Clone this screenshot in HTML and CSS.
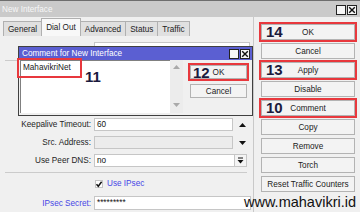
FILE: index.html
```html
<!DOCTYPE html>
<html>
<head>
<meta charset="utf-8">
<link rel="stylesheet" href="styles.css">
</head>
<body>
<div class="win">
  <div class="titlebar">
    <span class="title">New Interface</span>
    <span class="wctl">
      <svg viewBox="0 0 10 10"><rect x="0.5" y="0.5" width="9" height="9" fill="#f6f6f6" stroke="#222"/></svg>
      <svg viewBox="0 0 10 10"><rect x="0.5" y="0.5" width="9" height="9" fill="#f6f6f6" stroke="#222"/><path d="M2.2 2.2L7.8 7.8M7.8 2.2L2.2 7.8" stroke="#111" stroke-width="1.4"/></svg>
    </span>
  </div>
  <div class="main">
    <div class="left">
      <div class="tabs">
        <div class="tab">General</div>
        <div class="tab active">Dial Out</div>
        <div class="tab">Advanced</div>
        <div class="tab">Status</div>
        <div class="tab">Traffic</div>
      </div>
      <div class="panel">
        <div class="row"><span class="lbl"></span><span class="field wide"></span></div>
        <div class="sep first"></div>
        <div class="row"><span class="lbl"></span><span class="field"></span></div>
        <div class="row"><span class="lbl"></span><span class="field"></span></div>
        <div class="row"><span class="lbl"></span><span class="field"></span></div>
        <div class="row">
          <span class="lbl">Keepalive Timeout:</span><span class="field">60</span>
          <svg class="tog" viewBox="0 0 7 4"><polygon points="0,4 7,4 3.5,0" fill="#111"/></svg>
        </div>
        <div class="row">
          <span class="lbl">Src. Address:</span><span class="field off"></span>
          <svg class="tog" viewBox="0 0 7 4"><polygon points="0,0 7,0 3.5,4" fill="#111"/></svg>
        </div>
        <div class="row">
          <span class="lbl">Use Peer DNS:</span>
          <span class="field combo"><span class="ctext">no</span><span class="cbtn"><svg viewBox="0 0 7 7"><path d="M1 1H6" stroke="#111" stroke-width="1"/><polygon points="0.5,3 6.5,3 3.5,6.5" fill="#111"/></svg></span></span>
        </div>
        <div class="sep second"></div>
        <div class="row chkrow">
          <span class="chk"><svg viewBox="0 0 8 8"><path d="M1.5 4.2L3.3 6.2L6.6 1.8" fill="none" stroke="#111" stroke-width="1.5"/></svg></span>
          <span class="blue chklbl">Use IPsec</span>
        </div>
        <div class="row secret">
          <span class="lbl blue">IPsec Secret:</span><span class="field sfield">*********</span>
        </div>
      </div>
    </div>
    <div class="buttons">
      <div class="btn mark"><span class="num">14</span>OK</div>
      <div class="btn">Cancel</div>
      <div class="btn mark"><span class="num">13</span>Apply</div>
      <div class="btn">Disable</div>
      <div class="btn mark"><span class="num">10</span>Comment</div>
      <div class="btn">Copy</div>
      <div class="btn">Remove</div>
      <div class="btn">Torch</div>
      <div class="btn">Reset Traffic Counters</div>
    </div>
  </div>

  <div class="dialog">
    <div class="dtitle">
      <span>Comment for New Interface</span>
      <span class="wctl">
        <svg viewBox="0 0 10 10"><rect x="0.5" y="0.5" width="9" height="9" fill="#f6f6f6" stroke="#222"/></svg>
        <svg viewBox="0 0 10 10"><rect x="0.5" y="0.5" width="9" height="9" fill="#f6f6f6" stroke="#222"/><path d="M2.2 2.2L7.8 7.8M7.8 2.2L2.2 7.8" stroke="#111" stroke-width="1.4"/></svg>
      </span>
    </div>
    <div class="dbody">
      <div class="tarea">MahavikriNet</div>
      <div class="scroll">
        <svg viewBox="0 0 7 4"><polygon points="0,4 7,4 3.5,0" fill="#a9a9a9"/></svg>
        <svg viewBox="0 0 7 4"><polygon points="0,0 7,0 3.5,4" fill="#a9a9a9"/></svg>
      </div>
      <div class="dbtns">
        <div class="btn mark"><span class="num">12</span>OK</div>
        <div class="btn">Cancel</div>
      </div>
    </div>
  </div>

  <div class="redbox"></div>
  <div class="num n11">11</div>
  <div class="wm">www.mahavikri.id</div>
</div>
</body>
</html>
```

FILE: styles.css
```css
* { box-sizing: border-box; }
html, body { margin: 0; padding: 0; }
body {
  width: 360px;
  height: 212px;
  overflow: hidden;
  background: #f0f0f0;
  font-family: "Liberation Sans", Arial, sans-serif;
  font-size: 8.2px;
  color: #1e1e1e;
}
.win { position: relative; width: 360px; height: 212px; }

.titlebar {
  height: 17px;
  background: #cacaca;
  border-top: 1px solid #6e6e6e;
  display: flex;
  align-items: center;
  justify-content: space-between;
  padding: 1px 3px 0 2px;
}
.title { color: #f7f7f7; }
.wctl { display: flex; gap: 1px; }
.wctl svg { display: block; width: 10px; height: 10px; }

.main { display: flex; height: 195px; }
.left { width: 254px; border-right: 1px solid #c9c9c9; flex: none; }

.tabs { display: flex; align-items: flex-end; height: 19px; padding-left: 3px; }
.tab {
  height: 15px;
  padding: 0 4px;
  border: 1px solid #b0b0b0;
  border-bottom: none;
  background: #e0e0e0;
  display: flex;
  align-items: center;
  margin-right: -1px;
  color: #222;
}
.tab.active { height: 18px; background: #f8f8f8; position: relative; z-index: 1; }

.panel { padding-top: 6px; }
.row { display: flex; align-items: center; height: 13px; margin-bottom: 5px; }
.lbl { width: 91px; flex: none; text-align: right; white-space: nowrap; }
.field {
  margin-left: 3px;
  width: 139px;
  height: 13px;
  flex: none;
  background: #fff;
  border: 1px solid #c6c6c6;
  padding-left: 2px;
  line-height: 11px;
  color: #111;
}
.field.wide { width: 156px; }
.field.off { background: #ececec; }
.tog { width: 7px; height: 4px; margin-left: 6px; display: block; }
.combo { width: 153px; display: flex; padding-left: 0; }
.ctext { flex: 1; padding-left: 2px; }
.cbtn {
  width: 12px;
  border-left: 1px solid #c6c6c6;
  background: #f4f4f4;
  display: flex;
  align-items: center;
  justify-content: center;
}
.cbtn svg { width: 7px; height: 7px; display: block; }

.sep { height: 1px; margin-left: 5px; width: 242px; background: #cbcbcb; }
.sep.first { margin-bottom: 3px; }
.sep.second { margin-bottom: 4px; }

.chkrow { padding-left: 95px; margin-bottom: 6px; }
.chk {
  width: 8px;
  height: 8px;
  background: #fff;
  border: 1px solid #c4c4c4;
  display: flex;
}
.chk svg { width: 8px; height: 8px; margin: -1px; display: block; }
.chklbl { margin-left: 4px; }
.blue { color: #4646e6; }
.secret { height: 14px; }
.sfield { width: 157px; height: 14px; line-height: 12px; }

.buttons {
  margin-left: 7px;
  width: 94px;
  padding-top: 7px;
  display: flex;
  flex-direction: column;
  gap: 3px;
}
.btn {
  height: 16px;
  border: 1px solid #b3b3b3;
  background: #f3f3f3;
  display: flex;
  align-items: center;
  justify-content: center;
  position: relative;
  color: #222;
  white-space: nowrap;
}
.btn.mark { outline: 2px solid #e8383d; }

.num {
  font-family: "Liberation Sans", Arial, sans-serif;
  font-weight: bold;
  font-size: 15px;
  line-height: 15px;
  color: #1b1b3d;
}
.btn .num { position: absolute; left: 4px; top: -1px; }

.dialog {
  position: absolute;
  left: 18px;
  top: 46px;
  width: 235px;
  height: 70px;
  border: 1px solid #404040;
  background: #f0f0f0;
}
.dtitle {
  height: 13px;
  background: #5b5fd2;
  color: #fff;
  display: flex;
  align-items: center;
  justify-content: space-between;
  padding: 0 2px 0 3px;
}
.dtitle .wctl svg { width: 10px; height: 10px; }
.dbody { display: flex; height: 55px; }
.tarea {
  margin-left: 1px;
  width: 150px;
  height: 53px;
  background: #fff;
  border-top: 1px solid #808080;
  border-left: 1px solid #808080;
  padding: 1px 2px;
  line-height: 11px;
  color: #222;
}
.scroll {
  width: 13px;
  height: 53px;
  background: #ececec;
  display: flex;
  flex-direction: column;
  justify-content: space-between;
  align-items: center;
  padding: 5px 0 6px;
}
.scroll svg { width: 7px; height: 4px; display: block; }
.dbtns {
  margin-left: 7px;
  width: 57px;
  padding-top: 5px;
  display: flex;
  flex-direction: column;
  gap: 5px;
}
.dbtns .btn { height: 14px; }
.dbtns .num { left: 2px; top: -1px; }

.redbox {
  position: absolute;
  left: 17px;
  top: 58px;
  width: 65px;
  height: 20px;
  border: 2px solid #e8383d;
}
.n11 { position: absolute; left: 85px; top: 69px; }
.wm {
  position: absolute;
  left: 244px;
  top: 194px;
  font-size: 14.5px;
  line-height: 17px;
  color: #111;
  white-space: nowrap;
}
```
